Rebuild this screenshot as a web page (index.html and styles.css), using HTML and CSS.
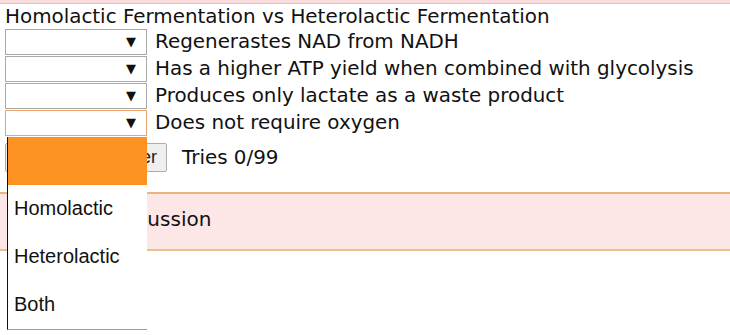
FILE: index.html
```html
<!DOCTYPE html>
<html lang="en">
<head>
	<meta charset="UTF-8">
	<title>Fermentation</title>
	<link rel="stylesheet" href="styles.css">
</head>
<body>
	<div class="topbar"></div>
	<div id="quiz">
		<div class="title">Homolactic Fermentation vs Heterolactic Fermentation</div>
		<div class="row"><span class="sel">&#9660;</span><span class="label">Regenerastes NAD from NADH</span></div>
		<div class="row"><span class="sel">&#9660;</span><span class="label">Has a higher ATP yield when combined with glycolysis</span></div>
		<div class="row"><span class="sel">&#9660;</span><span class="label">Produces only lactate as a waste product</span></div>
		<div class="row"><span class="sel focus">&#9660;</span><span class="label">Does not require oxygen</span></div>
		<div class="check">
			<button class="btn">Check Answer</button>
			<span class="tries">Tries 0/99</span>
		</div>
		<ul class="popup">
			<li class="hover"></li>
			<li>Homolactic</li>
			<li>Heterolactic</li>
			<li>Both</li>
		</ul>
	</div>
	<div class="discuss"><span>Discussion</span></div>
</body>
</html>
```
FILE: styles.css
```css
*{margin: 0;padding: 0;}
html, body { min-height: 100%; }
body { font-family: "DejaVu Sans", Verdana, sans-serif; font-size: 19.9px; color: #111; position: relative; min-height: 335px; }
li { list-style: none; }
.topbar { height: 3px; background: #fadcdc; border-bottom: 1px solid #cfc8c8; }
#quiz { padding-left: 5px; }
.title { height: 24px; line-height: 26px; }
.row { height: 27px; display: flex; align-items: flex-start; }
.sel { width: 130px; height: 24px; margin-top: 1px; padding-right: 10px; border: 1px solid #aaa; background: #fff; font-size: 13px; line-height: 24px; text-align: right; }
.sel.focus { border-color: #eda36b; }
.label { margin-left: 8px; line-height: 27px; }
.check { display: flex; align-items: center; margin-top: 7px; height: 29px; }
.btn { width: 162px; height: 29px; font-family: "Liberation Sans", Arial, sans-serif; font-size: 18px; color: #222; border: 1px solid #adadad; border-radius: 2px; background: #efefef; text-align: right; padding-right: 9px; }
.tries { margin-left: 15px; }
.discuss { margin-top: 20px; height: 55px; background: #fde6e6; border-top: 2px solid #ebb47c; border-bottom: 2px solid #ebc08f; line-height: 51px; padding-left: 105px; font-size: 20px; }
.popup { position: absolute; left: 7px; top: 137px; width: 139px; background: #fff; border-left: 1px solid #111; border-bottom: 1px solid #b49a88; font-family: "Liberation Sans", Arial, sans-serif; font-size: 20px; z-index: 2; }
.popup li { height: 48px; line-height: 46px; padding-left: 6px; }
.popup .hover { background: #fc9222; }
```
